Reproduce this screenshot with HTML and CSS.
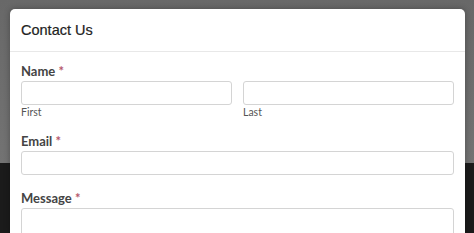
FILE: index.html
```html
<!DOCTYPE html>
<html lang="en">
<head>
<meta charset="UTF-8">
<title>Contact Us</title>
<link rel="stylesheet" href="styles.css">
</head>
<body>

<div class="page">
  <div class="page-top"></div>
  <div class="page-bottom"></div>
</div>

<!-- MODAL -->
<div class="modal">
  <div class="modal-header">
    <h2>Contact Us</h2>
  </div>

  <form class="modal-body">
    <div class="field">
      <label>Name <span class="req">*</span></label>
      <div class="name-row">
        <div class="name-part">
          <input type="text" aria-label="First name">
          <span class="sublabel">First</span>
        </div>
        <div class="name-part">
          <input type="text" aria-label="Last name">
          <span class="sublabel">Last</span>
        </div>
      </div>
    </div>

    <div class="field field-email">
      <label>Email <span class="req">*</span></label>
      <input type="email" aria-label="Email">
    </div>

    <div class="field">
      <label>Message <span class="req">*</span></label>
      <textarea aria-label="Message"></textarea>
    </div>
  </form>
</div>

</body>
</html>
```

FILE: styles.css
```css
* { box-sizing: border-box; }
body { margin: 0; overflow: hidden; font-family: Lato, "Open Sans", sans-serif; }

.page { height: 233px; display: flex; flex-direction: column; }
.page-top { height: 163px; background: linear-gradient(#686868, #737373); }
.page-bottom { flex: 1; background: #1b1b1b; }

/* MODAL */
.modal {
  position: absolute;
  left: 10px;
  top: 9px;
  width: 455px;
  height: 224px;
  overflow: hidden;
  background: #fff;
  border-radius: 5px 5px 0 0;
  box-shadow: 0 0 6px rgba(0, 0, 0, 0.3);
}

.modal-header {
  height: 43px;
  padding: 0 11px;
  display: flex;
  align-items: center;
  border-bottom: 1px solid #e8e8e8;
}

.modal-header h2 {
  margin: 0;
  font-family: "Liberation Sans", Arial, sans-serif;
  font-size: 14.5px;
  font-weight: normal;
  color: #222;
  -webkit-text-stroke: 0.2px #222;
}

.modal-body { padding: 11px 11px 0; }

.field { margin-bottom: 14px; }
.field-email { margin-bottom: 15px; }

.field label {
  display: block;
  font-size: 13px;
  line-height: 16px;
  font-weight: bold;
  color: #444;
  margin-bottom: 2px;
}

.req { color: #b5566a; }

.name-row { display: flex; gap: 11px; }
.name-part { flex: 1; display: flex; flex-direction: column; }

.sublabel {
  font-size: 10.5px;
  line-height: 14px;
  color: #555;
}

input,
textarea {
  display: block;
  width: 100%;
  height: 24px;
  border: 1px solid #d4d4d4;
  border-radius: 3px;
  background: #fff;
  font-size: 12px;
  padding: 3px 6px;
  outline: none;
}

textarea { height: 80px; resize: none; }
```
